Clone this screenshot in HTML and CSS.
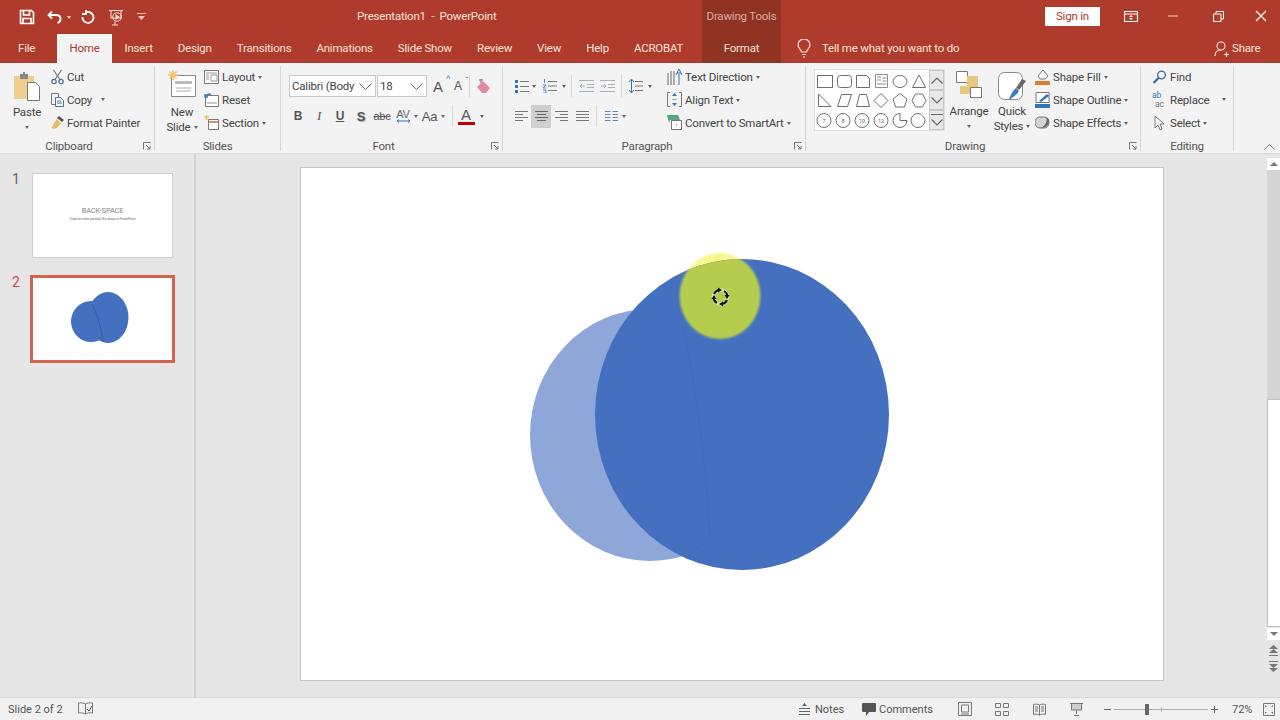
FILE: index.html
```html
<!DOCTYPE html>
<html lang="en">
<head>
  <meta charset="UTF-8" />
  <title>Presentation1 - PowerPoint</title>
  <link rel="stylesheet" href="styles.css">
</head>
<body>
<div class="app">

  <div class="titlebar">
    <div class="qat">
      <svg class="q-save" width="16" height="16" viewBox="0 0 16 16" fill="none" stroke="#fff" stroke-width="1.6"><path d="M1.5 1.5h11l2 2v11h-13z"/><path d="M4.5 2v4h6V2M4 14.5V9.5h8v5"/></svg>
      <svg class="q-undo" width="15" height="14" viewBox="0 0 15 14" fill="none" stroke="#fff" stroke-width="1.8"><path d="M5 1.5 1.5 5 5 8.5"/><path d="M2 5h7c3 0 4.5 2 4.5 4s-1 3.5-3 4"/></svg>
      <span class="caret caret-light q-caret"></span>
      <svg class="q-redo" width="14" height="14" viewBox="0 0 14 14" fill="none" stroke="#fff" stroke-width="1.8"><path d="M4.500 2.500A5.500 5.500 0 1 1 1.500 7"/><path d="M5 0v4H1"/></svg>
      <svg class="q-show" width="16" height="17" viewBox="0 0 16 17" fill="none" stroke="#f6d9d2" stroke-width="1.1"><path d="M1 1.5h14M3 2v7h10V2"/><circle cx="9" cy="8" r="4.2"/><path d="M8 6l3 2-3 2z" fill="#f6d9d2"/><path d="M7 12.5v3M4 16h6"/></svg>
      <svg class="q-more" width="9" height="8" viewBox="0 0 9 8" fill="#f2c9bf"><path d="M0 0h9v1H0zM1 3h7L4.500 7z"/></svg>
    </div>
    <div class="doc-title">Presentation1 &nbsp;-&nbsp; PowerPoint</div>
    <div class="context-title">Drawing Tools</div>
    <div class="window-controls">
      <span class="signin">Sign in</span>
      <svg class="w-opts" width="14" height="11" viewBox="0 0 14 11" fill="none" stroke="#fff"><path d="M.5.5h13v10H.5zM.5 3h13" stroke-width="1.2"/><path d="M5 6l2-2 2 2zM5 7l2 2 2-2z" fill="#fff" stroke="none"/></svg>
      <svg class="w-min" width="10" height="2" viewBox="0 0 10 2"><path d="M0 1h10" stroke="#f6d9d2"/></svg>
      <svg class="w-max" width="11" height="11" viewBox="0 0 11 11" fill="none" stroke="#fff"><path d="M.5 3h7.500v7.500H.5zM3 3V.5h7.500V8H8"/></svg>
      <svg class="w-close" width="12" height="12" viewBox="0 0 12 12" stroke="#fff" stroke-width="1.200"><path d="M1 1l10 10M11 1 1 11"/></svg>
    </div>
  </div>

  <div class="tabbar">
    <div class="tabs">
      <span class="tab tab-file">File</span>
      <span class="tab tab-home">Home</span>
      <span class="tab">Insert</span>
      <span class="tab">Design</span>
      <span class="tab">Transitions</span>
      <span class="tab">Animations</span>
      <span class="tab">Slide Show</span>
      <span class="tab">Review</span>
      <span class="tab">View</span>
      <span class="tab">Help</span>
      <span class="tab">ACROBAT</span>
    </div>
    <span class="tab tab-format">Format</span>
    <span class="tell">
      <svg width="14" height="19" viewBox="0 0 14 19" fill="none" stroke="#fbe6e0" stroke-width="1.200"><path d="M4.500 13c0-2.500-3.500-3.500-3.500-7a6 6 0 0 1 12 0c0 3.500-3.500 4.500-3.500 7z"/><path d="M5 15.500h4M6 18h2"/></svg>
      Tell me what you want to do
    </span>
    <span class="share">
      <svg width="15" height="16" viewBox="0 0 15 16" fill="none" stroke="#fbe6e0" stroke-width="1.100"><circle cx="7" cy="5" r="4"/><path d="M1 15c0-4 2.500-6 6-6M10 13.500h5M12.500 11v5"/></svg>
      Share
    </span>
  </div>

  <div class="ribbon">

    <section class="group g-clipboard">
      <div class="group-body">
        <div class="big big-paste">
          <svg width="28" height="29" viewBox="0 0 28 29"><path d="M1 4h20v23H1z" fill="#efcf8e"/><path d="M7 2h8v5H7z" fill="#8a8a8a"/><path d="M10 0h2v3h-2z" fill="#8a8a8a"/><path d="M14.500 10.500h8l4 4v14h-12z" fill="#fff" stroke="#777"/></svg>
          <span class="big-text">Paste</span>
          <span class="caret"></span>
        </div>
        <div class="col">
          <div class="row-btn"><svg class="ico" width="16" height="16" viewBox="0 0 16 16" fill="none" stroke="#4d6f9a" stroke-width="1.200"><circle cx="4" cy="12.500" r="2.200"/><circle cx="11" cy="12.500" r="2.200"/><path d="M5 10.500 11.500 1M10 10.500 3.500 1" stroke="#777"/></svg>Cut</div>
          <div class="row-btn"><svg class="ico" width="16" height="16" viewBox="0 0 16 16" fill="none" stroke="#777"><path d="M1.500 1.500h7v11h-7z"/><path d="M5.500 5.500h5l3 3v6h-8z" fill="#fff" stroke="#4d6f9a"/><path d="M7 9h4M7 11h5" stroke="#4d6f9a"/></svg>Copy<span class="caret caret-far"></span></div>
          <div class="row-btn"><svg class="ico" width="16" height="16" viewBox="0 0 16 16"><path d="M9 1l5 4-2 2-5-4z" fill="#555"/><path d="M7 4l4 4-4 5c-2 1-4 1-6 0 2-1 2-3 3-5z" fill="#e7bb6a"/></svg>Format Painter</div>
        </div>
      </div>
      <div class="group-label">Clipboard</div>
      <svg class="launcher" width="8" height="8" viewBox="0 0 8 8" fill="none" stroke="#777"><path d="M.5 7.500V.5h7M3 3l4 4M7 4v3H4"/></svg>
    </section>

    <section class="group g-slides">
      <div class="group-body">
        <div class="big big-new">
          <svg width="29" height="28" viewBox="0 0 29 28" fill="none"><path d="M3.500 5.500h24v21h-24z" fill="#fff" stroke="#888"/><path d="M7 11h17v3H7z" fill="#bbb"/><path d="M8 18h15M8 21h15" stroke="#aaa"/><path d="M5 0v10M0 5h10M1.500 1.500l7 7M8.500 1.500l-7 7" stroke="#f0c65c" stroke-width="1.500"/></svg>
          <span class="big-text big-new-text">New</span>
          <span class="big-text">Slide<span class="caret caret-inline"></span></span>
        </div>
        <div class="col">
          <div class="row-btn"><svg class="ico ico-wide" width="15" height="14" viewBox="0 0 15 14" fill="#fff" stroke="#777"><path d="M.5.5h14v13H.5z"/><path d="M2 3h11M2 5h3M2 7h3M2 9h3M7 5h6v6H7z" stroke="#999"/></svg>Layout<span class="caret caret-inline"></span></div>
          <div class="row-btn"><svg class="ico ico-wide" width="15" height="14" viewBox="0 0 15 14" fill="#fff" stroke="#777"><path d="M1.500 2.500h13v11h-13z"/><path d="M3 10h10" stroke="#999"/><path d="M1 4c1-3 4-3.500 6-2.500M1 1v3h3" fill="none" stroke="#2e75b6" stroke-width="1.300"/></svg>Reset</div>
          <div class="row-btn"><svg class="ico ico-wide" width="15" height="15" viewBox="0 0 15 15" fill="none"><path d="M4.500 4.500h10v10h-10z" fill="#fff" stroke="#777"/><path d="M4.500 7h10" stroke="#d0694a" stroke-width="1.500"/><path d="M0 2h5M2.500 0v5" stroke="#f0c65c" stroke-width="1.500"/></svg>Section<span class="caret caret-inline"></span></div>
        </div>
      </div>
      <div class="group-label">Slides</div>
    </section>

    <section class="group g-font">
      <div class="group-body font-body">
        <div class="tool-row font-top">
          <div class="combo combo-font">Calibri (Body<svg width="13" height="7" viewBox="0 0 13 7" fill="none" stroke="#666"><path d="M.5.500 6.500 6.500 12.500.5"/></svg></div>
          <div class="combo combo-size">18<svg width="13" height="7" viewBox="0 0 13 7" fill="none" stroke="#666"><path d="M.5.500 6.500 6.500 12.500.5"/></svg></div>
          <span class="glyph grow-a">A<i class="tip">^</i></span>
          <span class="glyph shrink-a">A<i class="tip">ˇ</i></span>
          <span class="vsep sep-font-1"></span>
          <svg class="eraser" width="15" height="15" viewBox="0 0 15 15"><path d="M1 8l6-6 7 7-4 5H6z" fill="#e48aa0"/><path d="M3 1h4M5 0v4" stroke="#777" fill="none"/></svg>
        </div>
        <div class="tool-row font-bottom">
          <span class="fcell fb">B</span>
          <span class="fcell fi">I</span>
          <span class="fcell fu">U</span>
          <span class="fcell fs">S</span>
          <span class="fcell fabc">abc</span>
          <span class="fcell fav">AV<svg width="15" height="4" viewBox="0 0 15 4" fill="none" stroke="#2e75b6"><path d="M2 2h11M3 .5 1 2l2 1.500M12 .5 14 2l-2 1.500"/></svg></span>
          <span class="caret caret-av"></span>
          <span class="fcell faa">Aa</span>
          <span class="caret caret-aa"></span>
          <span class="vsep sep-font-2"></span>
          <span class="fcell fcolor">A</span>
          <span class="caret caret-color"></span>
        </div>
      </div>
      <div class="group-label">Font</div>
      <svg class="launcher" width="8" height="8" viewBox="0 0 8 8" fill="none" stroke="#777"><path d="M.5 7.500V.5h7M3 3l4 4M7 4v3H4"/></svg>
    </section>

    <section class="group g-paragraph">
      <div class="group-body">
        <div class="para-tools">
          <div class="tool-row para-top">
            <svg class="p-bullets" width="14" height="13" viewBox="0 0 14 13" stroke="#777"><path d="M5 1.500h9M5 6.500h9M5 11.500h9"/><path d="M0 0h3v3H0zM0 5h3v3H0zM0 10h3v3H0z" fill="#2e75b6" stroke="none"/></svg>
            <span class="caret p-c1"></span>
            <svg class="p-numbers" width="14" height="14" viewBox="0 0 14 14" stroke="#777"><path d="M5 2.500h9M5 7h9M5 11.500h9"/><path d="M1.500 0v4M0 6h3L0 9h3M0 11h3v3H0" fill="none" stroke="#2e75b6" stroke-width=".8"/></svg>
            <span class="caret p-c2"></span>
            <span class="vsep p-s1"></span>
            <svg class="p-dec" width="15" height="12" viewBox="0 0 15 12" fill="none" stroke="#b0b0b0"><path d="M0 .5h15M8 4.500h7M8 7.500h7M0 11.500h15"/><path d="M6 6H1M3 4 1 6l2 2" stroke="#8fb0d0"/></svg>
            <svg class="p-inc" width="15" height="12" viewBox="0 0 15 12" fill="none" stroke="#b0b0b0"><path d="M0 .5h15M8 4.500h7M8 7.500h7M0 11.500h15"/><path d="M1 6h5M4 4l2 2-2 2" stroke="#8fb0d0"/></svg>
            <span class="vsep p-s2"></span>
            <svg class="p-spacing" width="14" height="14" viewBox="0 0 14 14" fill="none" stroke="#777"><path d="M6 2.500h8M6 7h8M6 11.500h8"/><path d="M2.500 1v12M0 3l2.500-3L5 3M0 11l2.500 3L5 11" stroke="#2e75b6"/></svg>
            <span class="caret p-c3"></span>
          </div>
          <div class="tool-row para-bottom">
            <svg class="a-left" width="13" height="10" viewBox="0 0 13 10" stroke="#777"><path d="M0 .5h13M0 3.500h8M0 6.500h13M0 9.500h8"/></svg>
            <span class="a-active"><svg width="13" height="10" viewBox="0 0 13 10" stroke="#666"><path d="M0 .5h13M2 3.500h9M0 6.500h13M2 9.500h9"/></svg></span>
            <svg class="a-right" width="13" height="10" viewBox="0 0 13 10" stroke="#777"><path d="M0 .5h13M5 3.500h8M0 6.500h13M5 9.500h8"/></svg>
            <svg class="a-just" width="13" height="10" viewBox="0 0 13 10" stroke="#777"><path d="M0 .5h13M0 3.500h13M0 6.500h13M0 9.500h13"/></svg>
            <span class="vsep p-s3"></span>
            <svg class="a-cols" width="13" height="10" viewBox="0 0 13 10" stroke="#5d8bbd"><path d="M0 .5h5.500M7.500 .5H13M0 3.500h5.500M7.500 3.500H13M0 6.500h5.500M7.500 6.500H13M0 9.500h5.500M7.500 9.500H13"/></svg>
            <span class="caret p-c4"></span>
          </div>
        </div>
        <div class="col col-para">
          <div class="row-btn"><svg class="ico ico-para" width="15" height="17" viewBox="0 0 15 17" fill="none" stroke="#666"><path d="M1 5v12M4 3v14M7 3v14"/><path d="M12 6v11" stroke="#2e75b6"/><path d="M9 7l3-6 3 6M10 5h4" stroke="#2e75b6"/></svg>Text Direction<span class="caret caret-inline"></span></div>
          <div class="row-btn"><svg class="ico ico-para" width="15" height="15" viewBox="0 0 15 15" fill="none" stroke="#777"><path d="M3 .5H.5v14H3M12 .5h2.500v14H12" /><path d="M5 7.500h5" stroke="#aaa"/><path d="M5 4l2.500-3L10 4zM5 11l2.500 3L10 11z" fill="#2e75b6" stroke="none"/></svg>Align Text<span class="caret caret-inline"></span></div>
          <div class="row-btn"><svg class="ico ico-para" width="15" height="15" viewBox="0 0 15 15" fill="none"><path d="M4.500 5.500h10v9h-10z" fill="#fff" stroke="#777"/><path d="M0 0h11l2 5H3L2 8z" fill="#5aa77f"/><path d="M9 10h1" stroke="#777"/></svg>Convert to SmartArt<span class="caret caret-inline"></span></div>
        </div>
      </div>
      <div class="group-label">Paragraph</div>
      <svg class="launcher" width="8" height="8" viewBox="0 0 8 8" fill="none" stroke="#777"><path d="M.5 7.500V.5h7M3 3l4 4M7 4v3H4"/></svg>
    </section>

    <section class="group g-drawing">
      <div class="group-body">
        <div class="gallery">
          <svg width="114" height="61" viewBox="815 69 114 61" fill="none" stroke="#6e6e6e">
            <rect x="817.500" y="74.500" width="15" height="12"/>
            <rect x="837.500" y="74.500" width="14" height="12" rx="3"/>
            <path d="M856.500 74.500h10l3 3v9h-13z"/>
            <path d="M875.500 73.500h12v13h-12zM877 76h4M877 79h4M882.500 77h4M882.500 80h4M877 83h9" stroke-width=".8"/>
            <ellipse cx="900" cy="80.500" rx="7" ry="6"/>
            <path d="M919 74l6.500 12.500h-13z"/>
            <path d="M818.500 93l12.500 12.500h-12.500z"/>
            <path d="M841.500 93.500h10l-4 12h-10z"/>
            <path d="M859.500 93.500h7l3 12h-13z"/>
            <path d="M881 92.500l7 7-7 7-7-7z"/>
            <path d="M900 92.500l7 5.500-2.500 8h-9l-2.500-8z"/>
            <path d="M915.500 93h7l3.500 6.500-3.500 6.500h-7l-3.500-6.500z"/>
            <circle cx="824" cy="119.500" r="7"/>
            <circle cx="843" cy="119.500" r="7"/>
            <circle cx="862" cy="119.500" r="7"/>
            <circle cx="881" cy="119.500" r="7"/>
            <path d="M900 112.500a7 7 0 1 0 7 7h-7z"/>
            <path d="M918 112.500h0a7 7 0 1 0 7 7c0-3-4-7-7-7z"/>
            <g class="num"><text x="824" y="122">7</text><text x="843" y="122">8</text><text x="862" y="122">10</text><text x="881" y="122">12</text></g>
          </svg>
          <div class="gal-arrows">
            <span class="gal-btn gal-up"><svg width="12" height="7" viewBox="0 0 12 7" fill="none" stroke="#666" stroke-width="1.200"><path d="M.5 6.500 6 1l5.500 5.500"/></svg></span>
            <span class="gal-btn"><svg width="12" height="7" viewBox="0 0 12 7" fill="none" stroke="#666" stroke-width="1.200"><path d="M.5.500 6 6l5.500-5.500"/></svg></span>
            <span class="gal-btn gal-more"><svg width="12" height="12" viewBox="0 0 12 12" fill="none" stroke="#666" stroke-width="1.200"><path d="M0 .5h12M.5 5.500 6 11l5.500-5.500"/></svg></span>
          </div>
        </div>
        <div class="big big-arrange">
          <svg width="27" height="27" viewBox="0 0 27 27"><path d="M.5.500h11v11H.5z" fill="#fff" stroke="#777"/><path d="M11 5h11v11H11zM4 15h10v8H4z" fill="#e7c77f"/><path d="M14.500 16.500h11v10h-11z" fill="#fff" stroke="#777"/></svg>
          <span class="big-text">Arrange</span>
          <span class="caret"></span>
        </div>
        <div class="big big-quick">
          <svg width="29" height="29" viewBox="0 0 29 29"><rect x=".5" y=".5" width="24" height="27" rx="6" fill="#fff" stroke="#888"/><path d="M28 9 21 18l-3-2 6-9z" fill="#666"/><path d="M18 16l3 3c-2 4-6 6-10 9 1-4 3-9 7-12z" fill="#3f7cc4"/></svg>
          <span class="big-text quick-text">Quick</span>
          <span class="big-text">Styles<span class="caret caret-inline"></span></span>
        </div>
        <div class="col col-shape">
          <div class="row-btn"><svg class="ico ico-shape" width="15" height="16" viewBox="0 0 15 16"><path d="M3 7 8 1l5 6-3 3H5z" fill="#fff" stroke="#777"/><path d="M0 12h15v4H0z" fill="#dd7d31"/></svg>Shape Fill<span class="caret caret-inline"></span></div>
          <div class="row-btn"><svg class="ico ico-shape" width="15" height="16" viewBox="0 0 15 16"><path d="M1 .5h13v10H1z" fill="#fff" stroke="#777"/><path d="M4 9l8-7 2 2-8 6z" fill="#2e75b6"/><path d="M0 12h15v4H0z" fill="#2e75b6"/></svg>Shape Outline<span class="caret caret-inline"></span></div>
          <div class="row-btn"><svg class="ico ico-shape" width="15" height="13" viewBox="0 0 15 13"><rect x="0" y="1" width="14" height="11" rx="5" fill="#d4d4d4" stroke="#777"/><path d="M6 12c5 0 8-3 8-7 0-2-1-3-3-4 2 4-1 9-5 11z" fill="#666"/></svg>Shape Effects<span class="caret caret-inline"></span></div>
        </div>
      </div>
      <div class="group-label">Drawing</div>
      <svg class="launcher" width="8" height="8" viewBox="0 0 8 8" fill="none" stroke="#777"><path d="M.5 7.500V.5h7M3 3l4 4M7 4v3H4"/></svg>
    </section>

    <section class="group g-editing">
      <div class="group-body">
        <div class="col">
          <div class="row-btn"><svg class="ico ico-edit" width="14" height="14" viewBox="0 0 14 14" fill="none" stroke="#2c6ca8" stroke-width="1.300"><circle cx="9" cy="5" r="3.800"/><path d="M6 8 1 13" stroke-width="2.200"/></svg>Find</div>
          <div class="row-btn"><span class="ico-edit ab-stack"><span class="ab-top">ab</span><span class="ab-bottom">ac</span></span>Replace<span class="caret caret-replace"></span></div>
          <div class="row-btn"><svg class="ico ico-edit" width="11" height="16" viewBox="0 0 11 16" fill="#fff" stroke="#777"><path d="M1 1v12l3-3 2 5 2-1-2-5h4z"/></svg>Select<span class="caret caret-inline"></span></div>
        </div>
      </div>
      <div class="group-label">Editing</div>
    </section>

    <svg class="collapse" width="11" height="6" viewBox="0 0 11 6" fill="none" stroke="#777"><path d="M.5 5.500 5.500.5l5 5"/></svg>
  </div>

  <div class="workspace">
    <aside class="thumbs">
      <div class="thumb-row">
        <span class="thumb-num">1</span>
        <div class="thumb">
          <div class="thumb-title">BACK-SPACE</div>
          <div class="thumb-sub">Steps to make partially fill a shape in PowerPoint</div>
        </div>
      </div>
      <div class="thumb-row thumb-row-active">
        <span class="thumb-num">2</span>
        <div class="thumb thumb-active">
          <svg width="139" height="82" viewBox="33 279 139 82">
            <ellipse cx="91" cy="322.500" rx="20" ry="20.500" fill="#4470bf"/>
            <ellipse cx="108" cy="318.500" rx="20.500" ry="25.500" fill="#4470bf"/>
            <path d="M92 305c5 10 9 22 11 37" fill="none" stroke="#2f5597" stroke-width=".7"/>
          </svg>
        </div>
      </div>
    </aside>

    <main class="canvas">
      <div class="slide">
        <svg width="862" height="512" viewBox="301 168 862 512">
          <defs>
            <clipPath id="bigClip"><ellipse cx="742" cy="414.500" rx="147" ry="155.500"/></clipPath>
            <filter id="soft"><feGaussianBlur stdDeviation="1"/></filter>
          </defs>
          <ellipse cx="650" cy="435" rx="120" ry="126" fill="#8fa6d9"/>
          <ellipse cx="720" cy="296" rx="40.500" ry="43" fill="#f7f68f" filter="url(#soft)"/>
          <ellipse cx="742" cy="414.500" rx="147" ry="155.500" fill="#4470bf"/>
          <path d="M684 330c12 60 22 130 26 210l-14 9" fill="none" stroke="#426dbb" stroke-width="1"/>
          <g clip-path="url(#bigClip)"><ellipse cx="720" cy="296" rx="40.500" ry="43" fill="#b5cc4f" filter="url(#soft)"/></g>
          <g class="spinner" fill="none">
            <g stroke="#fff" stroke-width="3.500" opacity=".5"><circle cx="720.500" cy="297" r="7"/></g>
            <g stroke="#111" stroke-width="2">
              <path d="M714 294a7 7 0 0 1 5-4"/><path d="M724 291a7 7 0 0 1 3.500 5"/><path d="M727 300a7 7 0 0 1-5 4"/><path d="M717 303a7 7 0 0 1-3.500-5"/>
            </g>
            <g fill="#111"><path d="M718 287.500l4 2.500-4 2.500z"/><path d="M729.500 295l-2.500 4-2.500-4z"/><path d="M723 306.500l-4-2.500 4-2.500z"/><path d="M711.500 299l2.500-4 2.500 4z"/></g>
          </g>
        </svg>
      </div>
    </main>

    <div class="vscroll">
      <span class="sb-btn sb-top"><i class="tri-up"></i></span>
      <span class="sb-track"></span>
      <span class="sb-rest"></span>
      <span class="sb-btn sb-down"><i class="tri-down"></i></span>
      <svg class="sb-page sb-prev" width="9" height="11" viewBox="0 0 9 11" fill="#777"><path d="M0 4l4.500-4L9 4zM0 8l4.500-4L9 8zM0 10h9v1H0z"/></svg>
      <svg class="sb-page sb-next" width="9" height="11" viewBox="0 0 9 11" fill="#777"><path d="M0 0h9v1H0zM0 3l4.500 4L9 3zM0 7l4.500 4L9 7z"/></svg>
    </div>
  </div>

  <footer class="status">
    <span class="st-slide">Slide 2 of 2</span>
    <svg class="st-proof" width="15" height="14" viewBox="0 0 15 14" fill="none" stroke="#777"><path d="M7.500 2C6 1 3 .5.500 1v10c2.500-.5 5.500 0 7 1 1.500-1 4.500-1.500 7-1V1c-2.500-.5-5.500 0-7 1zM7.500 2v10"/><path d="M9 7l2 2 3-5" stroke="#555"/></svg>
    <svg class="st-notes" width="11" height="12" viewBox="0 0 11 12" stroke="#666"><path d="M0 5.500h11M0 8.500h11M0 11.500h11" fill="none"/><path d="M3 3l2.500-3L8 3z" fill="#666" stroke="none"/></svg>
    <span class="st-text st-notes-text">Notes</span>
    <svg class="st-comments" width="14" height="13" viewBox="0 0 14 13"><path d="M1 0h12a1 1 0 0 1 1 1v7a1 1 0 0 1-1 1H7l-3 4V9H1a1 1 0 0 1-1-1V1a1 1 0 0 1 1-1z" fill="#555"/></svg>
    <span class="st-text st-comments-text">Comments</span>
    <svg class="st-view v-normal" width="14" height="14" viewBox="0 0 14 14" fill="none" stroke="#777"><path d="M.5.500h13v13H.5zM3.500 3v7h7V3zM3 12h8"/></svg>
    <svg class="st-view v-sorter" width="14" height="13" viewBox="0 0 14 13" fill="none" stroke="#777"><path d="M.5.500h5v4h-5zM8.500.500h5v4h-5zM.5 8.500h5v4h-5zM8.500 8.500h5v4h-5z"/></svg>
    <svg class="st-view v-reading" width="13" height="13" viewBox="0 0 13 13" fill="none" stroke="#777"><path d="M6.500 2C5 1 2 1 .5 1.500v10c1.500-.5 4.500-.5 6 .5 1.500-1 4.500-1 6-.5v-10C11 1 8 1 6.500 2zM6.500 2v10M2 4h3M2 6h3M2 8h3M8 4h3M8 6h3M8 8h3"/></svg>
    <svg class="st-view v-show" width="13" height="13" viewBox="0 0 13 13" fill="none" stroke="#777"><path d="M0 .5h13"/><path d="M1.500 1v6h10V1" fill="#cfcfcf"/><path d="M6.500 7v4M4 12.500h5"/></svg>
    <div class="zoom-slider">
      <span class="z-minus"></span>
      <div class="z-track"><i class="z-tick"></i><i class="z-thumb"></i></div>
      <span class="z-plus"></span>
    </div>
    <span class="st-text st-zoom">72%</span>
    <svg class="st-fit" width="12" height="13" viewBox="0 0 12 13" stroke="#777" fill="none"><path d="M.5.500h11v12H.5z"/><path d="M2 2l2 2H2zM10 2 8 4h2zM2 11l2-2H2zM10 11 8 9h2z" fill="#777" stroke="none"/></svg>
  </footer>

</div>
</body>
</html>
```

FILE: styles.css
```css
* { box-sizing: border-box; }
html, body { margin: 0; padding: 0; }
body { font-family: Roboto, "Liberation Sans", sans-serif; font-size: 11.5px; letter-spacing: -.2px; color: #444; background: #e6e6e6; }
svg { display: block; flex: none; }
.app { width: 1280px; height: 720px; display: flex; flex-direction: column; overflow: hidden; }

/* title bar */
.titlebar { height: 34px; background: #ae3b2b; display: flex; color: #f9e3dd; }
.qat { width: 357px; display: flex; align-items: center; padding-left: 19px; }
.q-undo { margin-left: 12px; }
.q-caret { margin-left: 5px; }
.q-redo { margin-left: 10px; }
.q-show { margin-left: 13px; }
.q-more { margin-left: 13px; }
.doc-title { width: 345px; line-height: 32px; }
.context-title { width: 79px; background: #8f3322; color: #dcaea3; text-align: center; line-height: 32px; }
.window-controls { flex: 1; display: flex; align-items: center; padding-left: 264px; padding-bottom: 2px; }
.signin { width: 55px; height: 19px; background: #fff; color: #ae3b2b; text-align: center; line-height: 19px; }
.w-opts { margin-left: 24px; }
.w-min { margin-left: 30px; }
.w-max { margin-left: 35px; }
.w-close { margin-left: 31px; }

/* tabs */
.tabbar { height: 29px; background: #ae3b2b; display: flex; color: #f9e3dd; line-height: 29px; white-space: nowrap; }
.tabs { width: 702px; flex: none; display: flex; }
.tab { padding: 0 12.5px; flex: none; }
.tab-file { padding: 0 0 0 18px; width: 57px; }
.tab-home { background: #f3f3f3; color: #ae3b2b; width: 55px; padding: 0; text-align: center; }
.tab-format { background: #8f3322; width: 79px; padding: 0; text-align: center; }
.tell { display: flex; align-items: center; gap: 11px; margin-left: 16px; width: 417px; flex: none; }
.share { display: flex; align-items: center; gap: 3px; flex: none; }

/* ribbon */
.ribbon { height: 91px; background: #f3f3f3; border-bottom: 1px solid #dcdcdc; display: flex; position: relative; }
.group { position: relative; height: 85px; margin-top: 3px; border-right: 1px solid #d6d6d6; display: flex; flex-direction: column; flex: none; }
.group-body { height: 73px; display: flex; flex: none; }
.group-label { text-align: center; line-height: 14px; color: #555; }
.launcher { position: absolute; right: 3px; bottom: 1px; }
.g-clipboard { width: 155px; }
.g-clipboard .group-label, .g-font .group-label, .g-drawing .group-label { padding-right: 16px; }
.g-paragraph .group-label { padding-right: 14px; }
.g-slides { width: 126px; }
.g-font { width: 222px; }
.g-paragraph { width: 303px; }
.g-drawing { width: 335px; }
.g-editing { width: 93px; }

.big { display: flex; flex-direction: column; align-items: center; line-height: 15px; }
.big-text { white-space: nowrap; }
.big-paste { width: 40px; margin-left: 7px; padding-top: 6px; }
.big-paste .big-text { margin-top: 4px; }
.big-paste > .caret { margin-top: 6px; }
.big-new { width: 42px; margin-left: 6px; padding-top: 4px; }
.big-new-text { margin-top: 7px; }
.big-arrange { width: 46px; margin-left: 1px; padding-top: 5px; }
.big-arrange .big-text { margin-top: 6px; }
.big-arrange > .caret { margin-top: 6px; }
.big-quick { width: 40px; margin-left: 0; padding-top: 6px; }
.quick-text { margin-top: 3px; }

.col { display: flex; flex-direction: column; margin-top: -1px; }
.row-btn { height: 23px; display: flex; align-items: center; white-space: nowrap; }
.g-clipboard .col { margin-left: 3px; }
.ico { margin-right: 1px; }
.g-slides .col { margin-left: 1px; }
.ico-wide { margin-right: 3px; }
.col-para { margin-left: 1px; }
.ico-para { margin-right: 3px; }
.col-shape { margin-left: 3px; }
.ico-shape { margin-right: 3px; }
.g-editing .col { margin-left: 11px; }
.ico-edit { margin-right: 3px; width: 15px; }
.ab-stack { display: flex; flex-direction: column; height: 18px; font-size: 8.500px; line-height: 9px; letter-spacing: 0; flex: none; }
.ab-top { color: #2e75b6; }
.ab-bottom { color: #777; padding-left: 3px; }

.caret { display: block; width: 0; height: 0; border-left: 2.500px solid transparent; border-right: 2.500px solid transparent; border-top: 3px solid #666; flex: none; }
.caret-light { border-top-color: #f6d9d2; }
.caret-inline { display: inline-block; margin-left: 3px; vertical-align: middle; }
.row-btn .caret-inline { margin-top: 1px; }
.caret-far { margin-left: 9px; }
.caret-replace { margin-left: 13px; }

/* font group */
.font-body { flex-direction: column; padding: 9px 0 0 8px; }
.tool-row { display: flex; align-items: center; }
.font-top { height: 22px; }
.font-bottom { height: 22px; margin-top: 8px; margin-left: -1.500px; }
.combo { height: 22px; background: #fff; border: 1px solid #c8c8c8; display: flex; align-items: center; justify-content: space-between; padding: 0 3px 0 2px; white-space: nowrap; }
.combo-font { width: 87px; }
.combo-size { width: 50px; margin-left: 1px; }
.glyph { position: relative; display: block; font-family: "Liberation Sans", sans-serif; color: #555; }
.grow-a { font-size: 15px; margin-left: 6px; width: 15px; }
.shrink-a { font-size: 12px; margin-left: 6px; width: 12px; }
.tip { position: absolute; top: -4px; right: -2px; font-size: 9px; font-style: normal; color: #2e75b6; }
.vsep { display: block; width: 1px; height: 22px; background: #d8d8d8; flex: none; }
.sep-font-1 { margin-left: 3px; }
.eraser { margin-left: 6px; }
.fcell { display: block; width: 21px; text-align: center; color: #555; font-family: "Liberation Sans", sans-serif; font-size: 12px; flex: none; }
.fb { font-weight: bold; }
.fi { font-style: italic; font-family: "Liberation Serif", serif; font-size: 13px; }
.fu { font-weight: bold; text-decoration: underline; }
.fs { font-weight: bold; text-shadow: 1px 1px 1px #aaa; font-size: 13px; }
.fabc { text-decoration: line-through; font-size: 11px; }
.fav { font-size: 11px; color: #666; line-height: 10px; display: flex; flex-direction: column; align-items: center; }
.faa { margin-left: 1px; font-size: 13px; width: 22px; }
.sep-font-2 { margin-left: 7px; }
.fcolor { margin-left: 5px; width: 17px; font-size: 15px; color: #555; line-height: 14px; border-bottom: 3px solid #c00000; }
.caret-color { margin-left: 5px; }

/* paragraph group */
.para-tools { width: 163px; padding: 9px 0 0 12px; }
.para-top { height: 22px; }
.para-bottom { height: 24px; margin-top: 7px; }
.p-c1 { margin-left: 3px; }
.p-numbers { margin-left: 7px; }
.p-c2 { margin-left: 5px; }
.p-s1 { margin-left: 5px; }
.p-dec { margin-left: 7px; }
.p-inc { margin-left: 6px; }
.p-s2 { margin-left: 6px; }
.p-spacing { margin-left: 7px; }
.p-c3 { margin-left: 5px; }
.a-active { width: 20px; height: 23px; background: #cfcfcf; margin-left: 3px; display: flex; align-items: center; justify-content: center; }
.a-right { margin-left: 4px; }
.a-just { margin-left: 8px; }
.p-s3 { margin-left: 7px; }
.a-cols { margin-left: 8px; }
.p-c4 { margin-left: 4px; }

/* drawing group */
.gallery { width: 131px; height: 62px; margin: 3px 0 0 8px; background: #fff; border: 1px solid #e0e0e0; display: flex; flex: none; }
.num text { font-size: 5.500px; text-anchor: middle; fill: #666; stroke: none; }
.gal-arrows { width: 16px; display: flex; flex-direction: column; }
.gal-btn { height: 20px; background: #e8e8e8; border: 1px solid #c8c8c8; display: flex; align-items: center; justify-content: center; }

/* status bar */
.status { height: 23px; background: #f1f1f1; border-top: 1px solid #d8d8d8; display: flex; align-items: center; color: #555; font-size: 11px; letter-spacing: 0; }
.st-slide { margin-left: 8px; width: 70px; flex: none; white-space: nowrap; }
.st-proof { margin-right: 706px; }
.st-notes-text { margin-left: 5px; width: 47px; flex: none; }
.st-comments-text { margin-left: 3px; width: 79px; flex: none; }
.v-sorter { margin-left: 23px; }
.v-reading { margin-left: 24px; }
.v-show { margin-left: 24px; }
.zoom-slider { display: flex; align-items: center; margin-left: 21px; width: 118px; flex: none; }
.z-minus { width: 7px; height: 1px; background: #666; flex: none; }
.z-track { position: relative; width: 94px; height: 1px; background: #aaa; margin: 0 3px; flex: none; }
.z-tick { position: absolute; left: 47px; top: -2px; width: 1px; height: 5px; background: #bbb; }
.z-thumb { position: absolute; left: 31px; top: -5px; width: 4px; height: 11px; background: #666; }
.z-plus { position: relative; width: 7px; height: 1px; background: #666; flex: none; }
.z-plus::after { content: ""; position: absolute; left: 3px; top: -3px; width: 1px; height: 7px; background: #666; }
.st-zoom { margin-left: 10px; width: 27px; flex: none; }
.st-fit { margin-left: 4px; }

/* workspace */
.workspace { flex: 1; min-height: 0; display: flex; }
.thumbs { width: 196px; flex: none; border-right: 2px solid #d4d4d4; padding-top: 19px; }
.thumb-row { display: flex; margin-bottom: 17px; }
.thumb-num { width: 32px; padding-left: 12px; font-size: 14px; color: #666; line-height: 12px; }
.thumb { width: 141px; height: 85px; background: #fff; border: 1px solid #cfcfcf; display: flex; flex-direction: column; align-items: center; padding-top: 32px; }
.thumb-title { font-size: 7.500px; color: #888; line-height: 9px; }
.thumb-sub { font-size: 3.500px; color: #777; line-height: 8px; white-space: nowrap; }
.thumb-row-active .thumb-num { width: 30px; color: #c0504d; padding-top: 1px; }
.thumb-active { width: 145px; height: 88px; border: 3px solid #d2634f; padding: 0; }
.canvas { flex: 1; padding: 13px 0 0 104px; }
.slide { width: 864px; height: 514px; background: #fff; border: 1px solid #c8c8c8; }

/* scrollbar */
.vscroll { width: 14px; flex: none; display: flex; flex-direction: column; align-items: flex-end; padding-top: 4px; }
.sb-btn { width: 13px; height: 12px; background: #fff; display: flex; align-items: center; justify-content: center; flex: none; }
.sb-track { width: 13px; height: 229px; background: #d5d5d5; flex: none; }
.sb-rest { width: 13px; height: 228px; background: #fff; border: 1px solid #c0c0c0; border-right: 0; flex: none; }
.sb-down { margin-top: 1px; }
.tri-up { border-left: 4px solid transparent; border-right: 4px solid transparent; border-bottom: 4px solid #777; }
.tri-down { border-left: 4px solid transparent; border-right: 4px solid transparent; border-top: 4px solid #777; }
.sb-page { margin-right: 2px; }
.sb-prev { margin-top: 5px; }
.sb-next { margin-top: 5px; }
.collapse { position: absolute; right: 5px; bottom: 3px; }
```
